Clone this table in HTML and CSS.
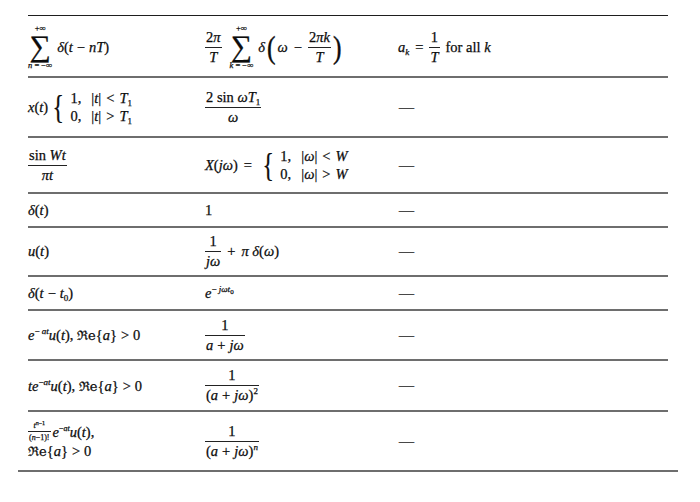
FILE: index.html
```html
<!DOCTYPE html>
<html>
<head>
<meta charset="utf-8">
<link rel="stylesheet" href="styles.css">
</head>
<body>
<div class="page">
  <div class="table">
    <div class="row r1">
      <div class="cell">
        <span class="expr">
          <span class="sum"><span class="lim top">+∞</span><span class="sig">∑</span><span class="lim bot"><span class="i">n</span> = −∞</span></span>
          <span><span class="i">δ</span>(<span class="i">t</span><span class="bin">−</span><span class="i">nT</span>)</span>
        </span>
      </div>
      <div class="cell">
        <span class="expr">
          <span class="frac"><span class="num">2<span class="i">π</span></span><span class="den i">T</span></span>
          <span class="sum sp"><span class="lim top">+∞</span><span class="sig">∑</span><span class="lim bot"><span class="i">k</span> = −∞</span></span>
          <span class="i">δ</span>
          <span class="paren">(</span><span class="i">ω</span><span class="op">−</span>
          <span class="frac"><span class="num">2<span class="i">πk</span></span><span class="den i">T</span></span>
          <span class="paren">)</span>
        </span>
      </div>
      <div class="cell">
        <span class="expr">
          <span class="i">a<sub>k</sub></span><span class="op">=</span>
          <span class="frac"><span class="num">1</span><span class="den i">T</span></span>
          <span class="txt">for all <span class="i">k</span></span>
        </span>
      </div>
    </div>

    <div class="row r2">
      <div class="cell">
        <span class="expr">
          <span><span class="i">x</span>(<span class="i">t</span>)</span>
          <span class="brace">{</span>
          <span class="cases">
            <span>1,</span><span><span class="bar">|</span><span class="i">t</span><span class="bar">|</span><span class="bin">&lt;</span><span class="i">T</span><sub>1</sub></span>
            <span>0,</span><span><span class="bar">|</span><span class="i">t</span><span class="bar">|</span><span class="bin">&gt;</span><span class="i">T</span><sub>1</sub></span>
          </span>
        </span>
      </div>
      <div class="cell">
        <span class="frac"><span class="num">2 sin <span class="i">ωT</span><sub>1</sub></span><span class="den i">ω</span></span>
      </div>
      <div class="cell"><span class="dash">—</span></div>
    </div>

    <div class="row r3">
      <div class="cell">
        <span class="frac"><span class="num">sin <span class="i">Wt</span></span><span class="den i">πt</span></span>
      </div>
      <div class="cell">
        <span class="expr">
          <span><span class="i">X</span>(<span class="i">jω</span>)</span><span class="op">=</span>
          <span class="brace">{</span>
          <span class="cases">
            <span>1,</span><span><span class="bar">|</span><span class="i">ω</span><span class="bar">|</span><span class="bin">&lt;</span><span class="i">W</span></span>
            <span>0,</span><span><span class="bar">|</span><span class="i">ω</span><span class="bar">|</span><span class="bin">&gt;</span><span class="i">W</span></span>
          </span>
        </span>
      </div>
      <div class="cell"><span class="dash">—</span></div>
    </div>

    <div class="row r4">
      <div class="cell"><span><span class="i">δ</span>(<span class="i">t</span>)</span></div>
      <div class="cell"><span>1</span></div>
      <div class="cell"><span class="dash">—</span></div>
    </div>

    <div class="row r5">
      <div class="cell"><span><span class="i">u</span>(<span class="i">t</span>)</span></div>
      <div class="cell">
        <span class="expr">
          <span class="frac"><span class="num">1</span><span class="den i">jω</span></span>
          <span class="op">+</span><span><span class="i">π</span> <span class="i">δ</span>(<span class="i">ω</span>)</span>
        </span>
      </div>
      <div class="cell"><span class="dash">—</span></div>
    </div>

    <div class="row r6">
      <div class="cell"><span><span class="i">δ</span>(<span class="i">t</span><span class="bin">−</span><span class="i">t</span><sub>0</sub>)</span></div>
      <div class="cell"><span><span class="i">e</span><sup>− <span class="i">jωt</span><sub class="ss">0</sub></sup></span></div>
      <div class="cell"><span class="dash">—</span></div>
    </div>

    <div class="row r7">
      <div class="cell"><span><span class="i">e</span><sup>− <span class="i">at</span></sup><span class="i">u</span>(<span class="i">t</span>), <span class="re">ℜe</span>{<span class="i">a</span>}<span class="bin">&gt;</span>0</span></div>
      <div class="cell">
        <span class="frac"><span class="num">1</span><span class="den"><span class="i">a</span><span class="bin">+</span><span class="i">jω</span></span></span>
      </div>
      <div class="cell"><span class="dash">—</span></div>
    </div>

    <div class="row r8">
      <div class="cell"><span><span class="i">te</span><sup>−<span class="i">at</span></sup><span class="i">u</span>(<span class="i">t</span>), <span class="re">ℜe</span>{<span class="i">a</span>}<span class="bin">&gt;</span>0</span></div>
      <div class="cell">
        <span class="frac"><span class="num">1</span><span class="den">(<span class="i">a</span><span class="bin">+</span><span class="i">jω</span>)<sup>2</sup></span></span>
      </div>
      <div class="cell"><span class="dash">—</span></div>
    </div>

    <div class="row r9">
      <div class="cell">
        <span class="stack">
          <span class="expr">
            <span class="frac small"><span class="num"><span class="i">t</span><sup><span class="i">n</span>−1</sup></span><span class="den">(<span class="i">n</span>−1)!</span></span>
            <span class="tight"><span class="i">e</span><sup>−<span class="i">at</span></sup><span class="i">u</span>(<span class="i">t</span>),</span>
          </span>
          <span><span class="re">ℜe</span>{<span class="i">a</span>}<span class="bin">&gt;</span>0</span>
        </span>
      </div>
      <div class="cell">
        <span class="frac"><span class="num">1</span><span class="den">(<span class="i">a</span><span class="bin">+</span><span class="i">jω</span>)<sup class="i">n</sup></span></span>
      </div>
      <div class="cell"><span class="dash">—</span></div>
    </div>
  </div>
  <div class="bottom-rule"></div>
</div>
</body>
</html>
```

FILE: styles.css
```css
body {
  margin: 0;
  background: #ffffff;
  color: #0c0c0c;
  font-family: "Liberation Serif", "DejaVu Serif", serif;
  font-size: 14.5px;
  -webkit-text-stroke: 0.25px #0c0c0c;
}

.page {
  padding-top: 15px;
}

.table {
  margin-left: 28px;
  width: 640px;
  border-top: 1px solid #1e1e1e;
}

.row {
  display: grid;
  grid-template-columns: 177px 193px 1fr;
  box-sizing: border-box;
  border-bottom: 2px solid #6e6e6e;
}

.row:last-child {
  border-bottom: none;
}

.r1 { height: 62px; }
.r2 { height: 60px; }
.r3 { height: 56px; }
.r4 { height: 34px; }
.r5 { height: 49px; }
.r6 { height: 34px; }
.r7 { height: 50px; }
.r8 { height: 51px; }
.r9 { height: 58px; }

.cell {
  display: flex;
  align-items: center;
  white-space: nowrap;
}

.r1 .cell { padding-top: 2px; }

.i { font-style: italic; }

.expr {
  display: inline-flex;
  align-items: center;
}

.op {
  margin: 0 6px;
}

.bin {
  margin: 0 4px;
}

.txt {
  margin-left: 6px;
}

sub, sup {
  font-size: 9px;
  line-height: 0;
}

sub { vertical-align: -3px; }
sup { vertical-align: 6px; }

.ss { font-size: 7px; vertical-align: -2px; }

.sum {
  display: inline-flex;
  flex-direction: column;
  align-items: center;
  margin-right: 5px;
}

.sum.sp { margin-left: 8px; }

.sum .sig {
  font-size: 30px;
  line-height: 24px;
  height: 24px;
}

.sum .lim {
  font-size: 8.5px;
  line-height: 9px;
}

.sum .lim.top { margin-bottom: 1px; }
.sum .lim.bot { margin-top: 3px; }

.frac {
  display: inline-flex;
  flex-direction: column;
  align-items: center;
  vertical-align: middle;
}

.frac .num {
  padding: 0 1px 1px;
  line-height: 17px;
}

.frac .den {
  border-top: 1px solid #222;
  padding: 1px 1px 0;
  line-height: 17px;
  align-self: stretch;
  text-align: center;
}

.frac.small {
  font-size: 8px;
  margin-right: 2px;
}

.frac.small .num,
.frac.small .den {
  line-height: 9px;
}

.frac.small sup {
  font-size: 6px;
  vertical-align: 3px;
}

.tight sup { font-size: 8px; }

.paren {
  font-size: 32px;
  line-height: 32px;
  font-weight: normal;
  margin: 0 1px;
  transform: scaleX(0.8);
  -webkit-text-stroke: 0.4px #0c0c0c;
}

.brace {
  font-size: 34px;
  line-height: 34px;
  margin: 0 4px 0 2px;
  transform: scaleX(0.7);
}

.cases {
  display: inline-grid;
  grid-template-columns: auto auto;
  column-gap: 10px;
  line-height: 18px;
}

.cases .bin { margin: 0 5px; }

.bar { font-style: normal; }

.re {
  font-family: "DejaVu Serif", serif;
  font-size: 13px;
}

.stack {
  display: flex;
  flex-direction: column;
  line-height: 18px;
}

.dash {
  font-size: 15px;
  color: #333;
  margin-left: 1px;
}

.bottom-rule {
  margin-left: 18px;
  width: 660px;
  height: 2px;
  background: #6e6e6e;
}
```
